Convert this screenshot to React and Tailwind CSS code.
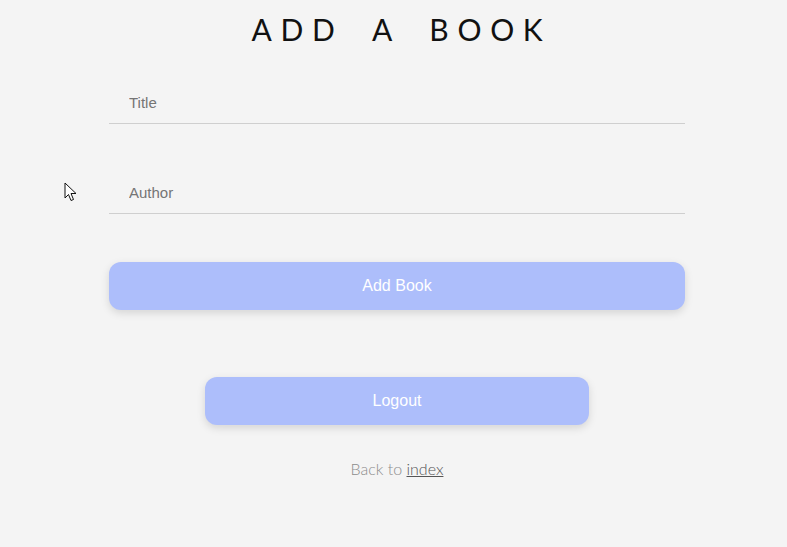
import React, { useState } from "react";

export default function App() {
  const [form, setForm] = useState({ title: "", author: "" });

  const handleChange = (e) => {
    const { name, value } = e.target;
    setForm((prev) => ({ ...prev, [name]: value }));
  };

  return (
    <div className="relative min-h-screen bg-[#f4f4f4] pl-[7px] pt-[11px] font-['Liberation_Sans',Arial,sans-serif]">
      <h1 className="pl-[9px] text-center text-[30px] leading-[36px] tracking-[0.29em] [word-spacing:13px] font-normal text-[#111] font-['Lato','Noto_Sans',sans-serif]">
        ADD A BOOK
      </h1>

      <form className="mx-auto mt-[34px] w-[576px]" onSubmit={(e) => e.preventDefault()}>
        <input
          name="title"
          value={form.title}
          onChange={handleChange}
          placeholder="Title"
          className="block h-[43px] w-full border-b border-[#cfcfcf] bg-transparent pl-[20px] text-[15px] text-[#333] outline-none placeholder:text-[#757575]"
        />
        <input
          name="author"
          value={form.author}
          onChange={handleChange}
          placeholder="Author"
          className="mt-[47px] block h-[43px] w-full border-b border-[#cfcfcf] bg-transparent pl-[20px] text-[15px] text-[#333] outline-none placeholder:text-[#757575]"
        />
        <button
          type="submit"
          className="mt-[48px] block h-[48px] w-full rounded-[12px] bg-[#adbefb] text-[16px] text-white shadow-[0_3px_8px_rgba(0,0,0,0.13)]"
        >
          Add Book
        </button>
      </form>

      <button className="mx-auto mt-[67px] block h-[48px] w-[384px] rounded-[12px] bg-[#adbefb] text-[16px] text-white shadow-[0_3px_8px_rgba(0,0,0,0.13)]">
        Logout
      </button>

      <p className="mt-[32px] text-center text-[16px] leading-[24px] font-light text-[#8c8c8c] font-['Lato','Noto_Sans',sans-serif]">
        Back to <a href="#" className="text-[#555] underline">index</a>
      </p>

      <svg className="absolute left-[64px] top-[182px]" width="14" height="21" viewBox="0 0 14 21">
        <path d="M1 1 L1 16 L4.5 12.5 L7 18.5 L9.5 17.5 L7 11.5 L12 11.5 Z" fill="#fff" stroke="#111" strokeWidth="1" />
      </svg>
    </div>
  );
}
